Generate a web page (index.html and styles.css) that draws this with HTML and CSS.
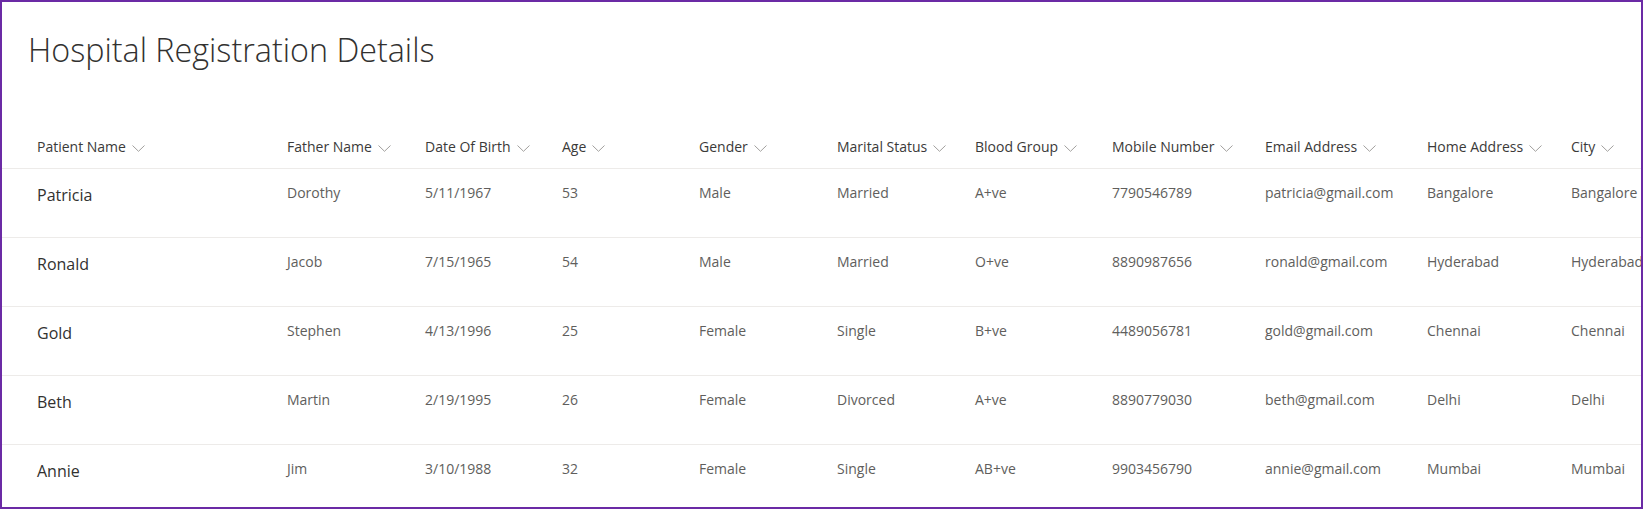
FILE: index.html
```html
<!DOCTYPE html>
<html lang="en">
<head>
	<meta charset="UTF-8">
	<title>Hospital Registration Details</title>
	<link rel="stylesheet" href="styles.css">
</head>
<body>

	<div class="frame">
		<h1 class="title">Hospital Registration Details</h1>

		<div class="list">
			<div class="head">
				<div class="th first">Patient Name <svg class="chev" viewBox="0 0 13 7"><path d="M0.5 0.5 L6.5 6.3 L12.5 0.5"/></svg></div>
				<div class="th">Father Name <svg class="chev" viewBox="0 0 13 7"><path d="M0.5 0.5 L6.5 6.3 L12.5 0.5"/></svg></div>
				<div class="th">Date Of Birth <svg class="chev" viewBox="0 0 13 7"><path d="M0.5 0.5 L6.5 6.3 L12.5 0.5"/></svg></div>
				<div class="th">Age <svg class="chev" viewBox="0 0 13 7"><path d="M0.5 0.5 L6.5 6.3 L12.5 0.5"/></svg></div>
				<div class="th">Gender <svg class="chev" viewBox="0 0 13 7"><path d="M0.5 0.5 L6.5 6.3 L12.5 0.5"/></svg></div>
				<div class="th">Marital Status <svg class="chev" viewBox="0 0 13 7"><path d="M0.5 0.5 L6.5 6.3 L12.5 0.5"/></svg></div>
				<div class="th">Blood Group <svg class="chev" viewBox="0 0 13 7"><path d="M0.5 0.5 L6.5 6.3 L12.5 0.5"/></svg></div>
				<div class="th">Mobile Number <svg class="chev" viewBox="0 0 13 7"><path d="M0.5 0.5 L6.5 6.3 L12.5 0.5"/></svg></div>
				<div class="th">Email Address <svg class="chev" viewBox="0 0 13 7"><path d="M0.5 0.5 L6.5 6.3 L12.5 0.5"/></svg></div>
				<div class="th">Home Address <svg class="chev" viewBox="0 0 13 7"><path d="M0.5 0.5 L6.5 6.3 L12.5 0.5"/></svg></div>
				<div class="th">City <svg class="chev" viewBox="0 0 13 7"><path d="M0.5 0.5 L6.5 6.3 L12.5 0.5"/></svg></div>
			</div>

			<div class="row">
				<div class="td first">Patricia</div>
				<div class="td">Dorothy</div>
				<div class="td">5/11/1967</div>
				<div class="td">53</div>
				<div class="td">Male</div>
				<div class="td">Married</div>
				<div class="td">A+ve</div>
				<div class="td">7790546789</div>
				<div class="td">patricia@gmail.com</div>
				<div class="td">Bangalore</div>
				<div class="td">Bangalore</div>
			</div>
			<div class="row">
				<div class="td first">Ronald</div>
				<div class="td">Jacob</div>
				<div class="td">7/15/1965</div>
				<div class="td">54</div>
				<div class="td">Male</div>
				<div class="td">Married</div>
				<div class="td">O+ve</div>
				<div class="td">8890987656</div>
				<div class="td">ronald@gmail.com</div>
				<div class="td">Hyderabad</div>
				<div class="td">Hyderabad</div>
			</div>
			<div class="row">
				<div class="td first">Gold</div>
				<div class="td">Stephen</div>
				<div class="td">4/13/1996</div>
				<div class="td">25</div>
				<div class="td">Female</div>
				<div class="td">Single</div>
				<div class="td">B+ve</div>
				<div class="td">4489056781</div>
				<div class="td">gold@gmail.com</div>
				<div class="td">Chennai</div>
				<div class="td">Chennai</div>
			</div>
			<div class="row">
				<div class="td first">Beth</div>
				<div class="td">Martin</div>
				<div class="td">2/19/1995</div>
				<div class="td">26</div>
				<div class="td">Female</div>
				<div class="td">Divorced</div>
				<div class="td">A+ve</div>
				<div class="td">8890779030</div>
				<div class="td">beth@gmail.com</div>
				<div class="td">Delhi</div>
				<div class="td">Delhi</div>
			</div>
			<div class="row">
				<div class="td first">Annie</div>
				<div class="td">Jim</div>
				<div class="td">3/10/1988</div>
				<div class="td">32</div>
				<div class="td">Female</div>
				<div class="td">Single</div>
				<div class="td">AB+ve</div>
				<div class="td">9903456790</div>
				<div class="td">annie@gmail.com</div>
				<div class="td">Mumbai</div>
				<div class="td">Mumbai</div>
			</div>
		</div>
	</div>

</body>
</html>
```

FILE: styles.css
```css
* {padding: 0; margin: 0; box-sizing: border-box;}
body {background: #fff; font-family: "Open Sans", "Noto Sans", sans-serif; color: #323130;}

.frame {width: 1643px; height: 509px; border: 2px solid #6b2aa5; overflow: hidden; background: #fff;}

.title {padding: 27px 0 0 26px; font-size: 32.3px; font-weight: 300; line-height: 40px; color: #323130;}

.list {margin-top: 58px;}
.head, .row {display: grid; grid-template-columns: 285px 138px 137px 137px 138px 138px 137px 153px 162px 144px 1fr; white-space: nowrap; border-bottom: 1px solid #edebe9;}
.head {height: 42px;}
.row {height: 69px;}

.th {align-self: start; margin-top: 10px; height: 20px; font-size: 14px; line-height: 20px; color: #3b3a39; display: flex; align-items: center;}
.th .chev {width: 13px; height: 7px; margin: 2px 0 0 6px; fill: none; stroke: #a19f9d; stroke-width: 1;}

.td {padding-top: 14px; font-size: 14px; line-height: 20px; color: #605e5c;}
.first {padding-left: 35px;}
.td.first {padding-top: 16px; font-size: 16px; color: #323130;}
```
